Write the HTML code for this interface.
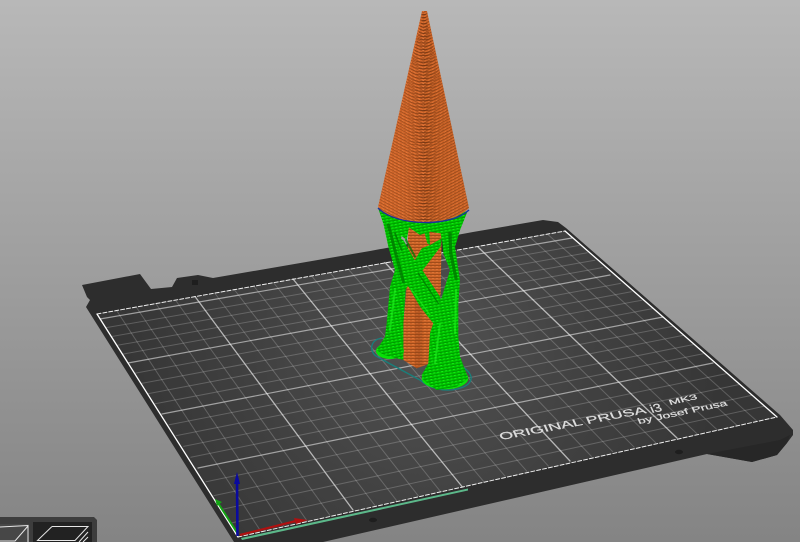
<!DOCTYPE html>
<html>
<head>
<meta charset="utf-8">
<style>
html,body{margin:0;padding:0;width:800px;height:542px;overflow:hidden;background:#999}
svg{display:block}
text{font-family:"Liberation Sans",sans-serif;fill:#dcdcdc;stroke:#dcdcdc;stroke-width:.2}
</style>
</head>
<body>
<svg xmlns="http://www.w3.org/2000/svg" width="800" height="542" viewBox="0 0 800 542">
<defs>
<linearGradient id="bg" x1="0" y1="0" x2="0" y2="1">
<stop offset="0" stop-color="#b8b8b8"/><stop offset="1" stop-color="#848484"/>
</linearGradient>
<radialGradient id="surf" gradientUnits="userSpaceOnUse" cx="425" cy="345" r="300">
<stop offset="0" stop-color="#525252"/><stop offset=".55" stop-color="#414141"/><stop offset="1" stop-color="#363636"/>
</radialGradient>
<linearGradient id="arc" gradientUnits="userSpaceOnUse" x1="378" y1="0" x2="470" y2="0">
<stop offset="0" stop-color="#8a3f14" stop-opacity="0"/>
<stop offset=".3" stop-color="#8a3f14" stop-opacity=".25"/>
<stop offset=".5" stop-color="#6e3210" stop-opacity=".9"/>
<stop offset=".7" stop-color="#8a3f14" stop-opacity=".25"/>
<stop offset="1" stop-color="#8a3f14" stop-opacity="0"/>
</linearGradient>
<pattern id="gp" width="12" height="9" patternUnits="userSpaceOnUse" patternTransform="rotate(-10)">
<rect width="12" height="9" fill="#00c400"/>
<rect y="0" width="12" height="3" fill="#009800"/>
<rect x="0" y="3" width="6" height="3" fill="#14ee14"/>
</pattern>
<pattern id="op" width="12" height="9" patternUnits="userSpaceOnUse">
<rect width="12" height="9" fill="#cc6428"/>
<rect y="0" width="12" height="3" fill="#a04c1a"/>
<rect x="0" y="3" width="6" height="3" fill="#dc7434"/>
</pattern>
<pattern id="chevL" width="4" height="3" patternUnits="userSpaceOnUse" patternTransform="skewY(28)">
<rect width="4" height="3" fill="#d4682c"/>
<rect y="0" width="4" height="1" fill="#a85220"/>
<rect x="2" y="2" width="2" height="1" fill="#e4783a"/>
</pattern>
<pattern id="chevR" width="4" height="3" patternUnits="userSpaceOnUse" patternTransform="skewY(-28)">
<rect width="4" height="3" fill="#cc6428"/>
<rect y="0" width="4" height="1" fill="#9c4c1c"/>
<rect x="0" y="2" width="2" height="1" fill="#de7234"/>
</pattern>
<clipPath id="coneclip"><path d="M422,11 L427,11 L469,208 C450,228 395,226 378,207 Z"/></clipPath>
</defs>

<rect width="800" height="542" fill="url(#bg)"/>

<!-- plate frame -->
<polygon fill="#2d2d2d" points="82,285 140,274 151,289 172,287 177,278 198,275 213,278 370,251 473,232 543,220 558,222 566,228 780,415 793,430 793,435 787,443 777,455 752,462 707,454 323,542 234,542 86,307 90,300 87,297"/>
<polygon fill="#272727" points="707,454 780,440 790,435 787,443 777,455 752,462"/>
<!-- plate surface -->
<polygon fill="url(#surf)" points="97,314 565,231 777,417 238,537"/>
<!-- holes -->
<rect x="192" y="280" width="6" height="5" fill="#1e1e1e"/>
<ellipse cx="679" cy="452" rx="4" ry="2.2" fill="#1e1e1e"/>
<ellipse cx="373" cy="520" rx="4" ry="2.2" fill="#1e1e1e"/>

<g id="grid" fill="none" stroke-linecap="round"></g>

<!-- bed label -->
<g>
<text transform="matrix(1,-0.185,0.45,1,501,440)" font-size="9.500" textLength="146" lengthAdjust="spacingAndGlyphs">ORIGINAL PRUSA</text>
<text transform="matrix(1,-0.2,0.45,1,652,413)" font-size="11" textLength="11" lengthAdjust="spacingAndGlyphs">i3</text>
<text transform="matrix(1,-0.22,0.45,1,670,405)" font-size="7" textLength="28" lengthAdjust="spacingAndGlyphs">MK3</text>
<text transform="matrix(1,-0.21,0.45,1,639,424)" font-size="7.500" textLength="89" lengthAdjust="spacingAndGlyphs">by Josef Prusa</text>
</g>

<!-- brim outline -->
<path d="M382,338 C370,340 369,351 376,356 L383,360 L420,380 C430,389 445,392 457,389 C470,386 478,378 463,367" fill="none" stroke="#17807c" stroke-width="1.3"/>

<!-- model lower: coordinates are 3x around (340,190) -->
<g transform="translate(340,190) scale(.33333)">
<polygon fill="url(#op)" points="205,110 305,130 302,310 275,430 270,520 230,535 190,510 190,400 200,290"/>
<rect x="225" y="300" width="22" height="230" fill="#8a4016" opacity=".3"/>
<g fill="url(#gp)">
<ellipse cx="150" cy="483" rx="42" ry="24" fill="#08e008"/>
<ellipse cx="315" cy="565" rx="70" ry="33" fill="#08e008"/>
<polygon points="115,55 130,100 145,170 165,240 150,290 140,400 135,440 110,480 130,495 190,510 190,400 197,300 205,285 190,240 180,190 185,130"/>
<polygon points="115,55 382,65 360,120 345,170 305,150 302,130 268,125 270,165 262,160 254,130 240,135 207,112 200,150 175,130 150,140 130,100"/>
<polygon points="150,130 190,150 225,212 250,245 300,320 320,380 300,430 270,430 280,400 240,350 200,280 170,200"/>
<polygon points="270,165 305,145 302,170 245,245 205,290 185,250 225,210 245,175"/>
<polygon points="305,130 345,120 382,65 360,120 345,170 360,270 355,340 355,440 360,500 385,565 350,590 290,600 250,570 245,555 265,520 270,430 300,340 330,240 310,190"/>
</g>
<g fill="none" stroke="#007600" stroke-linecap="round" opacity=".75">
<path d="M145,105 L170,200 L190,275" stroke-width="9"/>
<path d="M198,150 L225,200" stroke-width="6"/>
<path d="M330,130 L332,190 L348,265" stroke-width="10"/>
<path d="M235,250 L295,340" stroke-width="4"/>
<path d="M165,130 L185,180" stroke-width="5"/>
</g>
<g fill="none" stroke="#1ff01f" stroke-linecap="round" opacity=".6">
<path d="M150,420 L165,300" stroke-width="6"/>
<path d="M345,430 L348,300" stroke-width="6"/>
<path d="M285,520 L300,400" stroke-width="6"/>
<path d="M215,300 L270,375" stroke-width="4"/>
</g>
</g>

<!-- cone -->
<g clip-path="url(#coneclip)">
<rect x="370" y="5" width="54" height="225" fill="url(#chevL)"/>
<rect x="424" y="5" width="50" height="225" fill="url(#chevR)"/>
<g id="cone" fill="none"></g>
</g>
<path d="M378,208 C395,226 450,228 469,210" fill="none" stroke="#1d2f9c" stroke-width="1.3"/>

<!-- axes -->
<polygon points="241,538 468,488.5 468,490.5 242,540" fill="#5cb88a"/>
<path d="M238,534 L218,503" stroke="#13a513" stroke-width="2" fill="none"/>
<polygon points="215,499 222,502 217,506" fill="#13a513"/>
<path d="M240,535 L296,521" stroke="#b01010" stroke-width="2.2" fill="none"/>
<polygon points="294,518 308,520 296,524" fill="#b01010"/>
<path d="M237.500,536 L237,482" stroke="#0a0a9e" stroke-width="2.6" fill="none"/>
<polygon points="237,472 240,484 234,484" fill="#0a0a9e"/>

<!-- bottom-left widget -->
<polygon points="0,517 94,517 97,520 97,542 0,542" fill="#3d3d3d"/>
<rect x="0" y="524" width="29" height="18" fill="#474747"/>
<rect x="33" y="522" width="59" height="20" fill="#222"/>
<g fill="none" stroke="#e6e6e6" stroke-width="1">
<path d="M0,527 L28,525.500 V542 M28,526 L15,541 H0"/>
<path d="M52,526.500 H88 L75,540.500 H37.500 L52,526.500"/>
<path d="M88,532 L79,542 M88,537 L83,542"/>
</g>
</svg>
<script>
(function(){
var NS="http://www.w3.org/2000/svg";
var G=document.getElementById("grid");
function line(p,q,col,wd,dash){
 var l=document.createElementNS(NS,"line");
 l.setAttribute("x1",p[0].toFixed(1));l.setAttribute("y1",p[1].toFixed(1));
 l.setAttribute("x2",q[0].toFixed(1));l.setAttribute("y2",q[1].toFixed(1));
 l.setAttribute("stroke",col);l.setAttribute("stroke-width",wd);
 if(dash)l.setAttribute("stroke-dasharray",dash);
 G.appendChild(l);
}
function mix(a,b,t){return [a[0]+(b[0]-a[0])*t,a[1]+(b[1]-a[1])*t];}
function tbl(arr,t){
 var i=Math.min(Math.floor(t),arr.length-2);return mix(arr[i],arr[i+1],t-i);
}
var top=[[97,314],[195,296.5],[293,279],[385,262.5],[478,247],[565,231]];
var bot=[[238,537],[353,510],[462,486.5],[570,461],[677,438],[777,417]];
var lft=[[238,537],[198,468],[162,414],[128,363],[100,319],[97,314]];
var rgt=[[777,417],[713,363],[663,317],[610,275],[572,238],[565,231]];
var i;
for(i=1;i<25;i++){ if(i%5==0)continue; line(tbl(top,i/5),tbl(bot,i/5),"rgba(255,255,255,.2)",1); }
for(i=1;i<=20;i++){ if(i%5==0)continue; line(tbl(lft,i/5),tbl(rgt,i/5),"rgba(255,255,255,.2)",1); }
for(i=1;i<5;i++){ line(top[i],bot[i],"rgba(255,255,255,.62)",1.3); }
for(i=1;i<5;i++){ line(lft[i],rgt[i],"rgba(255,255,255,.52)",1.2); }
line(top[0],top[5],"#f0f0f0",1,"4 2");
line(bot[0],bot[5],"#f0f0f0",1,"4 2");
line(top[0],bot[0],"#ffffff",1.3);
line(top[5],bot[5],"#ffffff",1.3);
var C=document.getElementById("cone");
for(var y=14;y<=207;y+=3){
 var rx=(y-11)/196*45.5; if(rx<2)rx=2;
 var ry=rx/3;
 var p=document.createElementNS(NS,"path");
 p.setAttribute("d","M"+(424-rx).toFixed(1)+","+(y-ry*.1).toFixed(1)+" A"+rx.toFixed(1)+","+ry.toFixed(1)+" 0 0 0 "+(424+rx).toFixed(1)+","+(y-ry*.1).toFixed(1));
 p.setAttribute("stroke","url(#arc)");p.setAttribute("stroke-width","1");
 C.appendChild(p);
}
})();
</script>
</body>
</html>
